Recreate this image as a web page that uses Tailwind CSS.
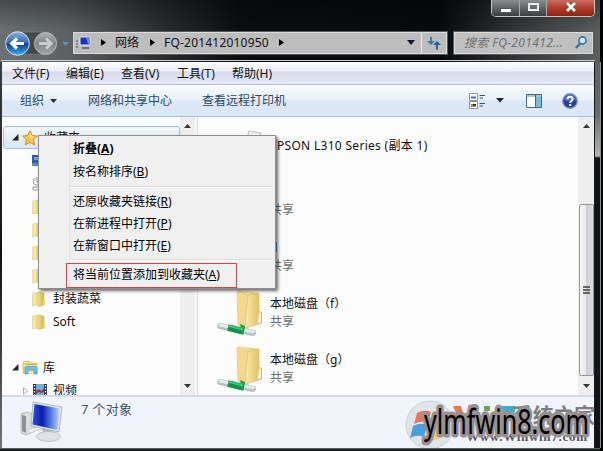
<!DOCTYPE html>
<html lang="zh-CN">
<head>
  <meta charset="UTF-8">
  <meta name="viewport" content="width=device-width, initial-scale=1.0"/>
  <title>FQ-201412010950</title>
  <script src="https://cdn.jsdelivr.net/npm/@tailwindcss/browser@4"></script>
</head>
<body class="w-[603px] h-[451px] overflow-hidden bg-black font-['Noto_Sans','Noto_Sans_CJK_SC',sans-serif] text-[12px] leading-[16px] text-[#111]">

<!-- shared icons -->
<svg class="absolute w-0 h-0">
  <defs>
    <linearGradient id="gold" x1="0" x2="1"><stop offset="0" stop-color="#f3e29a"/><stop offset="1" stop-color="#d2b746"/></linearGradient>
    <linearGradient id="gold2" x1="0" x2="1"><stop offset="0" stop-color="#fbedb0"/><stop offset="1" stop-color="#e3bf62"/></linearGradient>
    <linearGradient id="orbBlue" x1="0" y1="0" x2="0" y2="1"><stop offset="0" stop-color="#8fb4dc"/><stop offset=".48" stop-color="#2d66ae"/><stop offset=".52" stop-color="#0c3f92"/><stop offset="1" stop-color="#35b4f2"/></linearGradient>
    <linearGradient id="orbGray" x1="0" y1="0" x2="0" y2="1"><stop offset="0" stop-color="#b0b2b3"/><stop offset=".5" stop-color="#7e8183"/><stop offset="1" stop-color="#a4a7a8"/></linearGradient>
    <linearGradient id="screen" x1="0" x2="1"><stop offset="0" stop-color="#2a50d8"/><stop offset=".35" stop-color="#0a1fa8"/><stop offset=".6" stop-color="#3e68dc"/><stop offset="1" stop-color="#c6d8f8"/></linearGradient>
    <symbol id="folder" viewBox="0 0 14 16">
      <path d="M0.500 2L6 1v13l-5.500 1z" fill="#f2e7a6" stroke="#dccb78" stroke-width=".5"/>
      <path d="M5 2l3-1 4 1.500V14l-5 1.500L5 14z" fill="url(#gold)" stroke="#c9ae45" stroke-width=".5"/>
      <path d="M11 8h1.800v6H11z" fill="#e5d170"/>
    </symbol>
    <symbol id="share" viewBox="0 0 46 48">
      <path d="M24 1l18 3v31l-12 3z" fill="url(#gold2)"/>
      <path d="M20 3l2-1.500 9 5V41L21 36z" fill="#f3d98d" stroke="#dfc06c" stroke-width=".6"/>
      <path d="M31 6.500l11-2.500v31L28 39z" fill="url(#gold2)" stroke="#d9b964" stroke-width=".5"/>
      <path d="M42 23h2.500v11l-4 1" fill="#fbf3d8" stroke="#a99a6a" stroke-width=".7"/>
      <path d="M24 39l-1-4 5 2v4z" fill="#1f9a50"/>
      <path d="M3 37l33 7" stroke="#b9c0c4" stroke-width="6" stroke-linecap="round"/>
      <path d="M3 36l33 7" stroke="#e4e9eb" stroke-width="3" stroke-linecap="round"/>
      <path d="M11 38.500l16 4" stroke="#14944a" stroke-width="6.500"/>
      <path d="M12 37l14 3.500" stroke="#3ecb78" stroke-width="2"/>
    </symbol>
  </defs>
</svg>

<div class="relative w-[603px] h-[451px] flex flex-col">

  <!-- title and address -->
  <div class="h-[62px] w-[600px] flex flex-col bg-[linear-gradient(90deg,#6c7072_0px,#5c6062_70px,#282c2e_165px,#0a0e11_240px,#070a0d_440px,#35383a_520px,#5c5f60_600px)]">
    <div class="h-[31px] flex justify-end pr-[5px] bg-linear-to-b from-black/35 to-transparent">
      <div class="w-[104px] h-[17px] flex border border-t-0 border-[#c5c5c5] rounded-b-[5px] overflow-hidden">
        <div class="w-[28px] border-r border-[#aaa] flex justify-center bg-linear-to-b from-[#8b8d8e] to-[#3c3f41]"><span class="mt-[8px] w-[10px] h-[3px] bg-white border border-[#555] box-content"></span></div>
        <div class="w-[27px] border-r border-[#aaa] flex justify-center bg-linear-to-b from-[#8b8d8e] to-[#3c3f41]"><span class="mt-[3px] w-[11px] h-[8px] border-2 border-[#eee]"></span></div>
        <div class="flex-1 flex justify-center bg-linear-to-b from-[#c96d5e] via-[#b03c2a] to-[#8e2414]">
          <svg class="mt-[2px] w-[12px] h-[10px]" viewBox="0 0 12 10"><path d="M2 1l8 8M10 1L2 9" stroke="#553" stroke-width="4"/><path d="M2 1l8 8M10 1L2 9" stroke="#fff" stroke-width="2.600"/></svg>
        </div>
      </div>
    </div>
    <div class="h-[23px] flex items-center">
      <svg class="w-[73px] h-[26px] shrink-0" viewBox="0 0 73 26">
        <path d="M17 2h30a12 12 0 0 1 0 22H17z" fill="#44484a" stroke="#7d8183" stroke-width=".7"/>
        <circle cx="17.500" cy="13.500" r="11.800" fill="url(#orbBlue)" stroke="#dbe5ee" stroke-width="1"/>
        <path d="M24 13.500H13M17 8.500l-5.200 5 5.200 5" fill="none" stroke="#fff" stroke-width="3.200"/>
        <circle cx="45.500" cy="13.500" r="11" fill="url(#orbGray)" stroke="#b9bbbc" stroke-width="1"/>
        <path d="M39 13.500h11M46 8.500l5.200 5-5.200 5" fill="none" stroke="#c9cbcc" stroke-width="3"/>
        <path d="M62 12h7l-3.500 4z" fill="#5b93b4"/>
      </svg>
      <div class="w-[374px] h-[22px] flex items-center bg-[#bdbdbd] border border-[#dcdcdc] outline outline-[#55585a]">
        <svg class="ml-[2px] w-[16px] h-[15px]" viewBox="0 0 16 15">
          <path d="M1 5v8" stroke="#888" stroke-width="2" stroke-dasharray="2 1"/>
          <path d="M4 2h10v8H4z" fill="#1c35b8" stroke="#e2e6ee"/><path d="M10 2.500h3.500v7L12 9z" fill="#6f8be0"/><path d="M6 13h7" stroke="#6d7075" stroke-width="2"/>
        </svg>
        <svg class="ml-[9px] w-[5px] h-[7px]" viewBox="0 0 5 7"><path d="M0 0l5 3.500L0 7z"/></svg>
        <span class="ml-[9px] w-[25px]">网络</span>
        <svg class="ml-[10px] w-[5px] h-[7px]" viewBox="0 0 5 7"><path d="M0 0l5 3.500L0 7z"/></svg>
        <span class="ml-[9px] w-[107px] tracking-[0.2px] whitespace-nowrap">FQ-201412010950</span>
        <svg class="ml-[8px] w-[5px] h-[7px]" viewBox="0 0 5 7"><path d="M0 0l5 3.500L0 7z"/></svg>
        <svg class="ml-auto mr-[6px] w-[8px] h-[5px]" viewBox="0 0 8 5"><path d="M0 0h8L4 5z" fill="#15152a"/></svg>
        <div class="w-[25px] h-full flex items-center justify-center border-l border-[#eee]">
          <svg class="w-[14px] h-[14px]" viewBox="0 0 14 14"><path d="M4 1v6" stroke="#3a78ad" stroke-width="2"/><path d="M0 5h8L4 9z" fill="#3a78ad"/><path d="M10 7.500v6" stroke="#23609c" stroke-width="2"/><path d="M6 9h8l-4-4z" fill="#23609c"/></svg>
        </div>
      </div>
      <div class="ml-[7px] w-[139px] h-[22px] flex items-center bg-[#c0c0c0] border border-[#dcdcdc] outline outline-[#55585a]">
        <span class="ml-[9px] italic text-[#707070] tracking-[0.35px] whitespace-nowrap">搜索 FQ-201412...</span>
        <svg class="ml-auto mr-[5px] w-[12px] h-[13px]" viewBox="0 0 12 13"><circle cx="7.500" cy="4.500" r="3.600" fill="#d8e4ec" stroke="#2c74a8" stroke-width="1.600"/><path d="M5 7.500L1 12" stroke="#2c74a8" stroke-width="2.200"/></svg>
      </div>
    </div>
    <div class="mt-[6px] ml-px w-[594px] h-px bg-[#c8cacb]"></div>
  </div>

  <div class="h-[386px] flex">
    <div class="w-[2px] bg-linear-to-b from-[#3c4042] via-[#111] to-[#777]"></div>
    <div class="w-[592px] flex flex-col">

      <!-- menu bar -->
      <div class="h-[22px] flex items-center pt-[2px] pl-[10px] bg-[linear-gradient(#fcfdff_0px,#eef0f9_9px,#d9dcec_10px,#e4e7f5_22px)]">
        <span class="w-[54px]">文件(F)</span>
        <span class="w-[55px]">编辑(E)</span>
        <span class="w-[56px]">查看(V)</span>
        <span class="w-[55px]">工具(T)</span>
        <span>帮助(H)</span>
      </div>

      <!-- toolbar -->
      <div class="h-[33px] flex items-center pl-[18px] pr-[16px] border-t border-[#b8bfd2] border-b border-b-[#a6bcd3] bg-[linear-gradient(#fafcff_0px,#e8f0fa_15px,#dce7f5_16px,#dce8f5_33px)] text-[#2c4965]">
        <span>组织</span>
        <svg class="ml-[6px] w-[7px] h-[4px]" viewBox="0 0 7 4"><path d="M0 0h7L3.500 4z" fill="#1e3348"/></svg>
        <span class="ml-[31px]">网络和共享中心</span>
        <span class="ml-[30px]">查看远程打印机</span>
        <svg class="ml-auto w-[17px] h-[16px]" viewBox="0 0 17 16"><path d="M.5.500h8v7h-8zM.5 8.500h8v7h-8z" fill="#fff" stroke="#8c9299"/><path d="M2 3.500h5v2H2z" fill="#3b6fb5"/><path d="M2 11h5v3H2z" fill="#83984b"/><path d="M4 11h3v1.500H4z" fill="#223"/><path d="M10.500 2.500H16M10.500 5H14M10.500 10.500H16M10.500 13H14" stroke="#39536e" stroke-width="1.200"/></svg>
        <svg class="ml-[10px] w-[8px] h-[5px]" viewBox="0 0 8 5"><path d="M0 0h8L4 4.500z" fill="#1e2833"/></svg>
        <svg class="ml-[22px] w-[16px] h-[14px]" viewBox="0 0 16 14"><path d="M.5.500h15v13H.5z" fill="#fff" stroke="#41688a"/><path d="M1 1h14v2H1z" fill="#a8c4da"/><path d="M10 3h5v10h-5z" fill="#7cb8e2"/><path d="M9.500 1v12" stroke="#41688a"/></svg>
        <svg class="ml-[20px] w-[16px] h-[16px]" viewBox="0 0 16 16"><circle cx="8" cy="8" r="7.300" fill="#2744a5" stroke="#8796bd" stroke-width="1.200"/><path d="M2 7a6 6 0 0 1 12 0q-6 2-12 0z" fill="#6d86d2" opacity=".6"/><path d="M5.500 6.200C5.500 3 10.700 3 10.600 6c0 1.800-2.400 1.700-2.400 4M8.200 11v2" fill="none" stroke="#fff" stroke-width="1.900"/></svg>
      </div>

      <div class="h-[278px] flex overflow-hidden bg-[#fcfcfc]">
        <!-- navigation tree -->
        <div class="w-[178px] pl-px flex flex-col">
          <div class="mt-[9px] h-[23px] shrink-0 flex items-center border border-[#9fc1de] rounded-[3px] bg-linear-to-b from-[#f2f7fc] to-[#d8e8f5] pl-[8px]">
            <svg class="w-[7px] h-[7px]" viewBox="0 0 7 7"><path d="M6.500 0v6.500H0z" fill="#222"/></svg>
            <svg class="ml-[3px] w-[16px] h-[16px]" viewBox="0 0 16 16"><path d="M8 .8l2.200 4.700 5.200.6-3.900 3.500 1.100 5.300L8 12.300l-4.600 2.600 1.100-5.300L.6 6.100l5.200-.6z" fill="#fbc84a" stroke="#d98a1e"/><path d="M8 2.800l1.500 3.500 3 .5-4.500 1.400z" fill="#fff0a8"/></svg>
            <span class="ml-[6px]">收藏夹</span>
          </div>
          <div class="pl-[29px] flex flex-col">
            <div class="h-[23px] flex items-center"><svg class="w-[14px] h-[13px]" viewBox="0 0 14 13"><path d="M0 1h14v11H0z" fill="#2a5fae"/><path d="M0 9h14v3H0z" fill="#5a86bd"/><path d="M2 3h4v3H2z" fill="#6fa2e0"/></svg></div>
            <div class="h-[23px] flex items-center"><svg class="w-[14px] h-[14px]" viewBox="0 0 14 14"><circle cx="5" cy="4.500" r="3.800" fill="#eee" stroke="#a5a5a5"/><path d="M5 2v3h2M1 10h8v3H1z" fill="none" stroke="#999"/></svg></div>
            <div class="h-[23px] flex items-center"><svg class="w-[14px] h-[16px]"><use href="#folder"/></svg></div>
            <div class="h-[23px] flex items-center"><svg class="w-[14px] h-[16px]"><use href="#folder"/></svg></div>
            <div class="h-[23px] flex items-center"><svg class="w-[14px] h-[16px]"><use href="#folder"/></svg></div>
            <div class="h-[23px] flex items-center"><svg class="w-[14px] h-[16px]"><use href="#folder"/></svg></div>
            <div class="h-[23px] flex items-center"><svg class="w-[14px] h-[16px]"><use href="#folder"/></svg><span class="ml-[7px]">封装蔬菜</span></div>
            <div class="h-[23px] flex items-center"><svg class="w-[14px] h-[16px]"><use href="#folder"/></svg><span class="ml-[7px]">Soft</span></div>
          </div>
          <div class="mt-[23px] h-[23px] shrink-0 flex items-center pl-[9px]">
            <svg class="w-[7px] h-[7px]" viewBox="0 0 7 7"><path d="M6.500 0v6.500H0z" fill="#222"/></svg>
            <svg class="ml-[3px] w-[17px] h-[15px]" viewBox="0 0 17 15"><path d="M1 2l6-1 1 2h7v10H1z" fill="#f2dd85" stroke="#cdb45a" stroke-width=".8"/><path d="M3 4h11v3H3z" fill="#8fc06c"/><path d="M2 5h13v8H2z" fill="#f3e5a0"/><path d="M3 14V8q0-1.500 1.500-1.500h9Q15 6.500 15 8v6h-3v-4H6v4z" fill="#74bfe4" stroke="#4491ba" stroke-width=".7"/></svg>
            <span class="ml-[4px]">库</span>
          </div>
          <div class="h-[23px] shrink-0 flex items-center pl-[20px]">
            <svg class="w-[5px] h-[8px]" viewBox="0 0 5 8"><path d="M.5.800L4.500 4 .5 7.200z" fill="#fff" stroke="#999" stroke-width=".8"/></svg>
            <svg class="ml-[5px] w-[14px] h-[14px]" viewBox="0 0 14 14"><path d="M0 0h14v14H0z" fill="#263038"/><path d="M3 0h8v14H3z" fill="#69b4dc"/><path d="M3 7l3-2 2 2 3-3v4l-3 1-2-1-3 2z" fill="#a83340"/><path d="M1.500 1v12M12.500 1v12" stroke="#e6eef2" stroke-width="1.400" stroke-dasharray="1.500 1.500"/></svg>
            <span class="ml-[6px]">视频</span>
          </div>
        </div>
        <div class="w-[15px] flex flex-col items-center justify-between bg-[#eeeeef] pt-[7px] pb-[7px]">
          <svg class="w-[7px] h-[4px]" viewBox="0 0 7 4"><path d="M3.500 0L7 4H0z" fill="#333"/></svg>
          <svg class="w-[7px] h-[4px]" viewBox="0 0 7 4"><path d="M0 0h7L3.500 4z" fill="#333"/></svg>
        </div>
        <div class="w-[3px] border-r border-[#d8dfea] bg-[#f8f9fb]"></div>

        <!-- file list -->
        <div class="w-[380px] pt-px pl-[19px] flex flex-col">
          <div class="h-[55px] shrink-0 flex items-center">
            <svg class="w-[46px] h-[48px]" viewBox="0 0 46 48"><path d="M32 9l12 2-3 18-14-2z" fill="#f3f3f3" stroke="#aaa" stroke-width=".8"/><path d="M5 26l22-5 16 6v12l-20 6-18-6z" fill="#ccc"/></svg>
            <span class="ml-[7px] tracking-[0.3px] whitespace-nowrap">EPSON L310 Series (副本 1)</span>
          </div>
          <div class="h-[56px] shrink-0 flex items-center">
            <svg class="w-[46px] h-[48px]"><use href="#share"/></svg>
            <div class="ml-[7px] flex flex-col leading-[18px]"><span>c</span><span class="text-[#6d6d6d]">共享</span></div>
          </div>
          <div class="h-[56px] shrink-0 flex items-center">
            <svg class="w-[46px] h-[48px]"><use href="#share"/></svg>
            <div class="ml-[7px] flex flex-col leading-[18px]"><span>d</span><span class="text-[#6d6d6d]">共享</span></div>
          </div>
          <div class="h-[56px] shrink-0 flex items-center">
            <svg class="w-[46px] h-[48px]"><use href="#share"/></svg>
            <div class="ml-[7px] flex flex-col leading-[18px]"><span>本地磁盘（f）</span><span class="text-[#6d6d6d]">共享</span></div>
          </div>
          <div class="h-[56px] shrink-0 flex items-center">
            <svg class="w-[46px] h-[48px]"><use href="#share"/></svg>
            <div class="ml-[7px] flex flex-col leading-[18px]"><span>本地磁盘（g）</span><span class="text-[#6d6d6d]">共享</span></div>
          </div>
        </div>
        <div class="w-[16px] flex flex-col items-center bg-[#eeeeef]">
          <svg class="mt-[7px] w-[7px] h-[4px] shrink-0" viewBox="0 0 7 4"><path d="M3.500 0L7 4H0z" fill="#333"/></svg>
          <div class="mt-[76px] h-[172px] w-[15px] shrink-0 flex flex-col items-center justify-center gap-px border border-[#989898] rounded-[2px] bg-[linear-gradient(90deg,#f6f6f6,#e8e8ea_45%,#cfcfd3_50%,#dcdce0)]">
            <span class="w-[7px] h-[2px] bg-[#666]"></span>
            <span class="w-[7px] h-[2px] bg-[#666]"></span>
            <span class="w-[7px] h-[2px] bg-[#666]"></span>
          </div>
          <svg class="mt-[8px] w-[7px] h-[4px] shrink-0" viewBox="0 0 7 4"><path d="M0 0h7L3.500 4z" fill="#333"/></svg>
        </div>
      </div>

      <!-- details pane -->
      <div class="h-[53px] flex border-t-2 border-[#d5dbe6] bg-[#f1f4fb]">
        <svg class="ml-[18px] mt-[4px] w-[44px] h-[42px]" viewBox="0 0 44 42">
          <path d="M1 13l6-2 8 3v16l-9 4-5-2z" fill="#dcdedf" stroke="#a3a6a8" stroke-width=".7"/><path d="M2 14l4 1v17l-4-2z" fill="#8f9395"/><path d="M7 29l15-5 2 3-14 5z" fill="#eee" stroke="#bbb" stroke-width=".5"/>
          <path d="M22 27l10 1 1 7h-9z" fill="#b4b8bb"/><ellipse cx="28.500" cy="35.500" rx="12" ry="5" fill="#dfe2e4" stroke="#b0b4b7" stroke-width=".7"/>
          <path d="M13 1l29 5-3 25-28-6z" fill="#e8ebee" stroke="#9fa5ab" stroke-width=".8"/><path d="M14.500 3l25.500 4.500-2.500 21.500-25-5.500z" fill="url(#screen)"/>
        </svg>
        <span class="ml-[17px] mt-[3px] text-[13px] leading-[18px] tracking-[0.3px] text-[#44546e]">7 个对象</span>
      </div>
    </div>

    <!-- right frame -->
    <div class="w-px bg-[#15181a]"></div>
    <div class="w-[5px] bg-[linear-gradient(#606364_0px,#66696a_50px,#b5b5b3_94px,#101416_96px,#101416_100%)]"></div>
    <div class="w-px bg-[#8b9092]"></div>
  </div>
  <div class="h-[3px] w-[600px] bg-[#1c2122] border-t border-[#596061]"></div>

  <!-- context menu -->
  <div class="absolute left-[38px] top-[135px] w-[238px] h-[154px] flex flex-col pt-[3px] border border-[#8e8e8e] bg-[linear-gradient(90deg,#f0f0f0_30px,#e2e2e2_30px,#e2e2e2_31px,#f0f0f0_31px)] shadow-[2px_2px_3px_#00000090] text-black">
    <div class="h-[22px] pl-[34px] leading-[20px] font-bold">折叠(<u>A</u>)</div>
    <div class="h-[22px] pl-[34px] leading-[21px]">按名称排序(<u>B</u>)</div>
    <div class="ml-[31px] mr-[3px] mt-[4px] mb-[3px] h-[2px] border-t border-[#dcdcdc] bg-white"></div>
    <div class="h-[22px] pl-[34px] leading-[21px]">还原收藏夹链接(<u>R</u>)</div>
    <div class="h-[22px] pl-[34px] leading-[21px]">在新进程中打开(<u>P</u>)</div>
    <div class="h-[22px] pl-[34px] leading-[21px]">在新窗口中打开(<u>E</u>)</div>
    <div class="ml-[31px] mr-[3px] mt-[3px] h-[2px] border-t border-[#dcdcdc] bg-white"></div>
    <div class="mt-[2px] ml-[27px] w-[171px] h-[25px] pl-[6px] leading-[21px] border border-[#cf4650]">将当前位置添加到收藏夹(<u>A</u>)</div>
  </div>

  <!-- watermark -->
  <svg class="absolute left-[400px] top-[396px] w-[196px] h-[52px]" viewBox="0 0 196 52">
    <circle cx="30" cy="29" r="24" fill="#dfe4ea" stroke="#cdd3da"/>
    <path d="M17 17q7-4 14-1l-3 11q-7-3-14 1z" fill="#e8765a"/><path d="M33 17q6 4 13 1l-3 11q-7 3-13-1z" fill="#a8ca7c"/><path d="M13 30q7-4 14-1l-3 12q-7-3-14 1z" fill="#4b9ede"/><path d="M29 31q7 4 13 1l-3 11q-7 3-13-1z" fill="#f0cf72"/>
    <path d="M53 10h8l5 17-5 3z" fill="#e4794c"/><path d="M68 9h8l-5 16z" fill="#e4794c"/>
    <path d="M101 10h14v6H99z" fill="#3fadc9"/><path d="M84 10h6v5h-6z" fill="#6ba55a"/>
    <text x="112" y="27" font-size="21" font-weight="bold" fill="#7c7d82" textLength="83" lengthAdjust="spacingAndGlyphs" font-family="Noto Sans CJK SC">系统之家</text>
    <text x="66" y="45" font-size="13" font-weight="bold" fill="#55565c" textLength="121" font-family="Liberation Serif">Www.Winwin7.com</text>
    <text x="24" y="38" font-size="34" font-family="Noto Sans" textLength="165" lengthAdjust="spacingAndGlyphs" fill="#000" stroke="#999090" stroke-width="7" stroke-linejoin="round" paint-order="stroke">ylmfwin8.com</text>
  </svg>
</div>
</body>
</html>
